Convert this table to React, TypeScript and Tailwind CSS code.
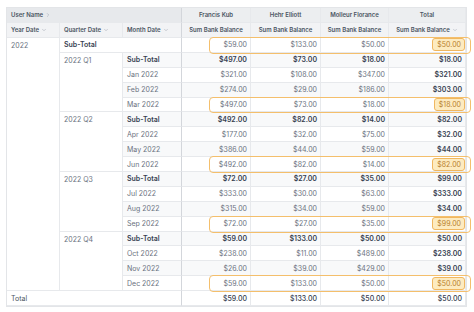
import React from "react";
import { ChevronDown, ChevronRight } from "lucide-react";

type Kind = "ysub" | "qsub" | "leaf";
type Row = { kind: Kind; label: string; q?: string; v: string[]; hl?: boolean };

const rows: Row[] = [
  { kind: "ysub", label: "Sub-Total", v: ["$59.00", "$133.00", "$50.00", "$50.00"], hl: true },
  { kind: "qsub", q: "2022 Q1", label: "Sub-Total", v: ["$497.00", "$73.00", "$18.00", "$18.00"] },
  { kind: "leaf", label: "Jan 2022", v: ["$321.00", "$108.00", "$347.00", "$321.00"] },
  { kind: "leaf", label: "Feb 2022", v: ["$274.00", "$29.00", "$186.00", "$303.00"] },
  { kind: "leaf", label: "Mar 2022", v: ["$497.00", "$73.00", "$18.00", "$18.00"], hl: true },
  { kind: "qsub", q: "2022 Q2", label: "Sub-Total", v: ["$492.00", "$82.00", "$14.00", "$82.00"] },
  { kind: "leaf", label: "Apr 2022", v: ["$177.00", "$32.00", "$75.00", "$32.00"] },
  { kind: "leaf", label: "May 2022", v: ["$386.00", "$44.00", "$59.00", "$44.00"] },
  { kind: "leaf", label: "Jun 2022", v: ["$492.00", "$82.00", "$14.00", "$82.00"], hl: true },
  { kind: "qsub", q: "2022 Q3", label: "Sub-Total", v: ["$72.00", "$27.00", "$35.00", "$99.00"] },
  { kind: "leaf", label: "Jul 2022", v: ["$333.00", "$30.00", "$63.00", "$333.00"] },
  { kind: "leaf", label: "Aug 2022", v: ["$315.00", "$34.00", "$59.00", "$34.00"] },
  { kind: "leaf", label: "Sep 2022", v: ["$72.00", "$27.00", "$35.00", "$99.00"], hl: true },
  { kind: "qsub", q: "2022 Q4", label: "Sub-Total", v: ["$59.00", "$133.00", "$50.00", "$50.00"] },
  { kind: "leaf", label: "Oct 2022", v: ["$238.00", "$11.00", "$489.00", "$238.00"] },
  { kind: "leaf", label: "Nov 2022", v: ["$26.00", "$39.00", "$429.00", "$39.00"] },
  { kind: "leaf", label: "Dec 2022", v: ["$59.00", "$133.00", "$50.00", "$50.00"], hl: true },
];

const totals = ["$59.00", "$133.00", "$50.00", "$50.00"];
const ROW_H = 14.9;

const base = "flex items-center border-b border-r border-[#e7e9ec] px-[4px] leading-none whitespace-nowrap";
const head = "text-[6px] font-semibold text-[#4b5563]";

export default function App() {
  const cells: React.ReactNode[] = [];

  // header row 1
  cells.push(
    <div key="h-un" className={`${base} ${head} col-span-3 bg-[#e7e9ec] border-r-[#d3d6db]`}>
      User Name
      <ChevronRight size={6} strokeWidth={2} className="ml-[2px] text-[#9ca3af]" />
    </div>
  );
  ["Francis Kub", "Hehr Elliott", "Molleur Florance", "Total"].forEach((n) =>
    cells.push(
      <div key={"h1" + n} className={`${base} ${head} justify-center bg-[#eceef0]`}>
        {n}
      </div>
    )
  );
  // header row 2
  ["Year Date", "Quarter Date", "Month Date"].forEach((n, i) =>
    cells.push(
      <div
        key={"h2" + n}
        className={`${base} ${head} bg-[#f2f3f5] ${i === 2 ? "border-r-[#d3d6db]" : ""}`}
      >
        {n}
        <ChevronDown size={6} strokeWidth={2} className="ml-[2px] text-[#9ca3af]" />
      </div>
    )
  );
  [0, 1, 2, 3].forEach((i) =>
    cells.push(
      <div key={"h2v" + i} className={`${base} ${head} justify-center bg-[#f2f3f5]`}>
        Sum Bank Balance
        {i === 3 && <ChevronDown size={6} strokeWidth={2} className="ml-[2px] text-[#9ca3af]" />}
      </div>
    )
  );

  rows.forEach((r, idx) => {
    const stripe = idx % 2 === 1 ? "bg-[#f8f9fa]" : "bg-white";
    if (idx === 0) {
      cells.push(
        <div key="year" className={`${base} row-span-17 items-start pt-[4px] text-[#6b7280] bg-white`}>
          2022
        </div>
      );
      cells.push(
        <div key="ysub" className={`${base} col-span-2 font-semibold text-[#374151] bg-white border-r-[#d3d6db]`}>
          Sub-Total
        </div>
      );
    } else {
      if (r.q) {
        cells.push(
          <div key={"q" + idx} className={`${base} row-span-4 items-start pt-[4px] text-[#6b7280] bg-white`}>
            {r.q}
          </div>
        );
      }
      cells.push(
        <div
          key={"m" + idx}
          className={`${base} ${stripe} border-r-[#d3d6db] ${
            r.kind === "qsub" ? "font-semibold text-[#374151]" : "text-[#6b7280]"
          }`}
        >
          {r.label}
        </div>
      );
    }
    r.v.forEach((val, ci) => {
      const isTotal = ci === 3;
      const strong = r.kind === "qsub" || (isTotal && !r.hl);
      cells.push(
        <div
          key={"v" + idx + "-" + ci}
          className={`${base} justify-end pr-[3px] ${stripe} ${
            strong ? "font-semibold text-[#374151]" : "text-[#6b7280]"
          }`}
        >
          {isTotal && r.hl ? (
            <span className="-mr-[3px] flex h-[13px] items-center rounded-[3px] border border-[#f0b760] bg-[#fdebc0] pl-[4px] pr-[3px] text-[#b8802c]">
              {val}
            </span>
          ) : (
            val
          )}
        </div>
      );
    });
  });

  // total row
  cells.push(
    <div key="tot" className={`${base} col-span-3 text-[#4b5563] bg-white border-r-[#d3d6db]`}>
      Total
    </div>
  );
  totals.forEach((val, ci) =>
    cells.push(
      <div key={"t" + ci} className={`${base} justify-end pr-[3px] bg-white font-medium text-[#374151]`}>
        {val}
      </div>
    )
  );

  return (
    <div className="h-[312px] w-[474px] bg-white pl-[7px] pt-[8px] font-['Inter',sans-serif] text-[7px] antialiased">
      <div className="relative w-[459px] outline outline-1 outline-[#e3e5e8]">
        <div className="grid grid-cols-[53px_63px_59px_69px_70px_68px_77px] grid-rows-[15px_15px_repeat(18,14.9px)]">
          {cells}
        </div>
        {rows.map((r, idx) =>
          r.hl ? (
            <div
              key={"hl" + idx}
              className="pointer-events-none absolute left-[202px] w-[262px] rounded-[4px] border-[1.5px] border-[#f4bf6c]"
              style={{ top: 30 + idx * ROW_H - 1, height: ROW_H + 2 }}
            />
          ) : null
        )}
      </div>
    </div>
  );
}
